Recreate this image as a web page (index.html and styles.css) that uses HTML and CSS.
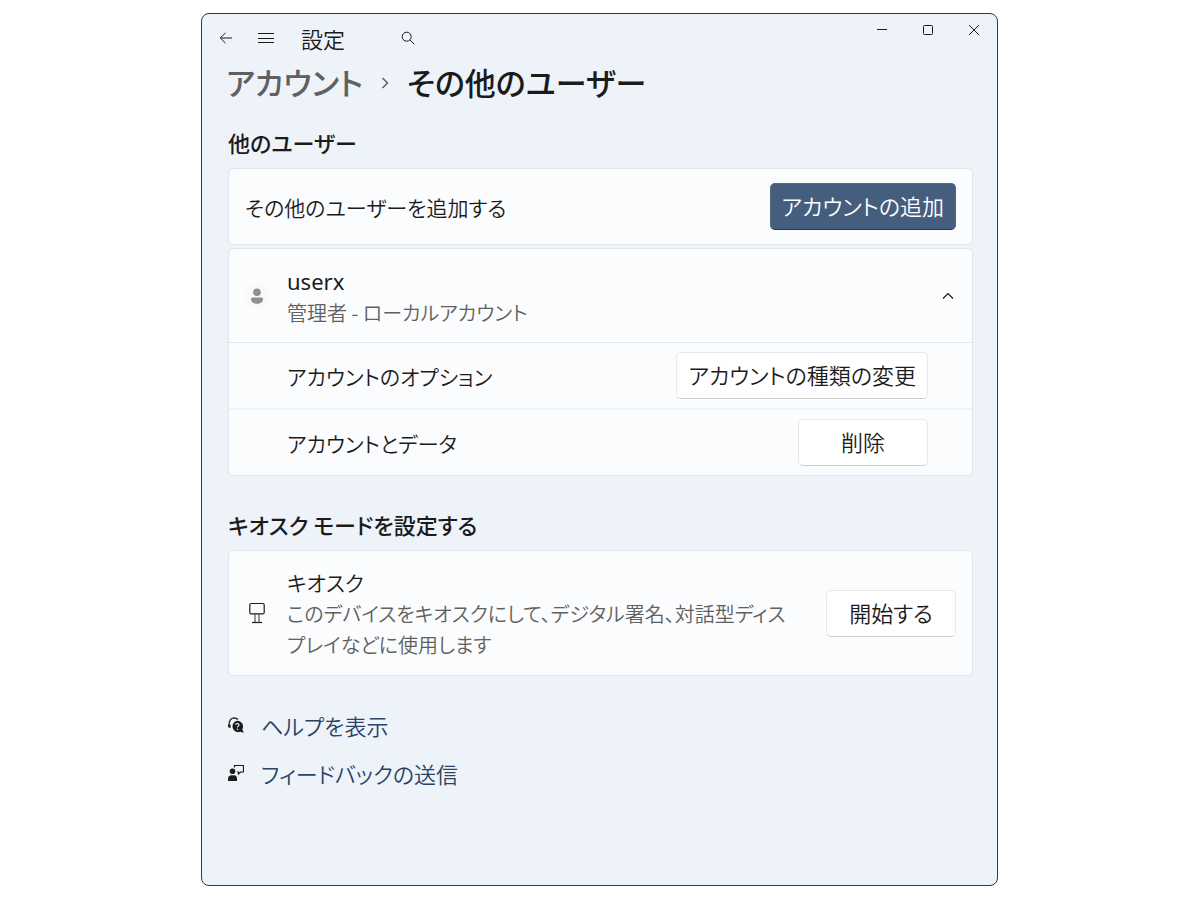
FILE: index.html
```html
<!DOCTYPE html>
<html lang="ja">
<head>
<meta charset="utf-8">
<meta name="viewport" content="width=device-width, initial-scale=1">
<title>設定</title>
<link rel="stylesheet" href="styles.css">
</head>
<body>
<div class="window">
  <header class="titlebar">
    <div class="nav">
      <button class="icon-button" type="button" aria-label="戻る">
        <svg width="14" height="14" viewBox="0 0 14 14" fill="none" stroke="currentColor"><path d="M13 7H1.5M6.5 1.8L1.3 7l5.2 5.2"/></svg>
      </button>
      <button class="icon-button" type="button" aria-label="メニュー">
        <svg width="16" height="12" viewBox="0 0 16 12" fill="none" stroke="currentColor"><path d="M0 1.5h16M0 6.5h16M0 10.5h16"/></svg>
      </button>
      <span class="app-name">設定</span>
      <button class="icon-button" type="button" aria-label="検索">
        <svg width="14" height="14" viewBox="0 0 14 14" fill="none" stroke="currentColor"><circle cx="5.7" cy="5.7" r="4.5"/><path d="M9 9l4.2 4.2"/></svg>
      </button>
    </div>
    <div class="caption">
      <button class="caption-button" type="button" aria-label="最小化">
        <svg width="12" height="12" viewBox="0 0 12 12" fill="none" stroke="currentColor"><path d="M1 5.5h10"/></svg>
      </button>
      <button class="caption-button" type="button" aria-label="最大化">
        <svg width="12" height="12" viewBox="0 0 12 12" fill="none" stroke="currentColor"><rect x="1.5" y="1.5" width="9" height="9" rx="1"/></svg>
      </button>
      <button class="caption-button" type="button" aria-label="閉じる">
        <svg width="12" height="12" viewBox="0 0 12 12" fill="none" stroke="currentColor"><path d="M1 1l10 10M11 1L1 11"/></svg>
      </button>
    </div>
  </header>

  <main class="content">
    <h1 class="breadcrumb">
      <a class="crumb" href="#accounts">アカウント</a>
      <svg class="crumb-arrow" width="8" height="12" viewBox="0 0 8 12" fill="none" stroke="currentColor" stroke-width="1.5"><path d="M1.5 1l5 5-5 5"/></svg>
      <span>その他のユーザー</span>
    </h1>

    <section class="section">
      <h2 class="section-title">他のユーザー</h2>
      <div class="card add-row">
        <span class="label">その他のユーザーを追加する</span>
        <button class="button primary" type="button">アカウントの追加</button>
      </div>
      <div class="card">
        <div class="row user-row">
          <svg class="row-icon" width="24" height="24" viewBox="0 0 24 24"><circle cx="12" cy="12" r="12" fill="#f9f9f9"/><g fill="#8f8f8f"><circle cx="12" cy="8.3" r="3.8"/><path d="M6 15.2c0-1 .7-1.7 1.7-1.7h8.6c1 0 1.7.7 1.7 1.7 0 2.8-2.6 4.5-6 4.5s-6-1.7-6-4.5z"/></g></svg>
          <div class="row-text">
            <div class="label latin">userx</div>
            <div class="description">管理者 - ローカルアカウント</div>
          </div>
          <button class="expander" type="button" aria-label="折りたたむ" aria-expanded="true">
            <svg width="12" height="8" viewBox="0 0 12 8" fill="none" stroke="currentColor" stroke-width="1.2"><path d="M1 6.5l5-5 5 5"/></svg>
          </button>
        </div>
        <div class="row sub-row">
          <span class="label">アカウントのオプション</span>
          <button class="button" type="button">アカウントの種類の変更</button>
        </div>
        <div class="row sub-row last">
          <span class="label">アカウントとデータ</span>
          <button class="button" type="button">削除</button>
        </div>
      </div>
    </section>

    <section class="section">
      <h2 class="section-title">キオスク モードを設定する</h2>
      <div class="card row kiosk-row">
        <svg class="row-icon" width="24" height="24" viewBox="0 0 24 24" fill="none" stroke="#1b1b1b" stroke-width="1.2"><rect x="4.8" y="2.5" width="14.4" height="10.4" rx="1.5"/><path d="M10 13v8M14 13v8" stroke="#555"/><path d="M7 21.5h10"/></svg>
        <div class="row-text">
          <div class="label">キオスク</div>
          <div class="description">このデバイスをキオスクにして、デジタル署名、対話型ディスプレイなどに使用します</div>
        </div>
        <button class="button" type="button">開始する</button>
      </div>
    </section>

    <nav class="links">
      <a class="link" href="#help">
        <svg width="16" height="16" viewBox="0 0 16 16"><path d="M1 8.500C1 3.500 3 1 6 .8c1.700 0 3 .6 4 1.700" fill="none" stroke="#1b1b1b" stroke-width="1.200"/><path d="M0 7.500h2.600v3.300H1.300L0 10z" fill="#1b1b1b"/><path d="M9.300 3.800a5.700 5.700 0 0 1 5 8.500l1.500 3.500-3.700-1a5.700 5.700 0 1 1-2.800-11z" fill="#1b1b1b"/><path d="M7.800 8c0-2 3.200-2 3.200 0 0 1.200-1.600 1.200-1.600 2.600M9.400 11.700v1.200" fill="none" stroke="#fff" stroke-width="1.100"/></svg>
        <span>ヘルプを表示</span>
      </a>
      <a class="link" href="#feedback">
        <svg width="16" height="16" viewBox="0 0 16 16"><g fill="#1b1b1b"><circle cx="4.5" cy="6.3" r="2.8"/><path d="M0 16v-2.600C0 11.500 1.500 10.200 3.300 10.200h2.800c1.800 0 2.900 1.300 2.900 3.200V16z"/></g><path d="M6.500 2.500v-2h9v6.500h-2.700l-2.300 2V7H9" fill="none" stroke="#1b1b1b" stroke-width="1.200"/></svg>
        <span>フィードバックの送信</span>
      </a>
    </nav>
  </main>
</div>
</body>
</html>
```
FILE: styles.css
```css
* {
  box-sizing: border-box;
}

body {
  margin: 0;
  min-height: 100vh;
  display: flex;
  padding: 13px 202px 14px 201px;
  background: #fff;
  color: #1b1b1b;
  font-family: "Noto Sans CJK JP", "Noto Sans", sans-serif;
  font-weight: 350;
  font-feature-settings: "palt";
}

button {
  font: inherit;
  font-feature-settings: inherit;
  color: inherit;
}

svg {
  display: block;
  flex: none;
}

.window {
  flex: 1;
  min-width: 0;
  border: 1px solid #1d3f5c;
  border-radius: 8px;
  background: #eef3fa;
}

.titlebar {
  display: flex;
  justify-content: space-between;
  align-items: flex-start;
}

.nav {
  display: flex;
  align-items: center;
  height: 48px;
  padding-left: 4px;
}

.icon-button,
.caption-button,
.expander {
  display: flex;
  align-items: center;
  justify-content: center;
  padding: 0;
  border: 0;
  background: none;
}

.icon-button {
  width: 40px;
  height: 36px;
}

.app-name {
  padding: 0 43px 0 15px;
  font-size: 22px;
  line-height: 32px;
}

.caption {
  display: flex;
}

.caption-button {
  width: 46px;
  height: 32px;
}

.content {
  padding: 0 24px 24px;
}

.breadcrumb {
  display: flex;
  align-items: center;
  gap: 18px;
  margin: 0;
  padding-bottom: 7px;
  font-size: 31px;
  line-height: 40px;
  font-weight: 500;
}

.breadcrumb > :not(svg) {
  margin-bottom: 2px;
}

.crumb,
.crumb-arrow {
  color: #606060;
}

.crumb {
  text-decoration: none;
}

.section {
  display: grid;
  gap: 3px;
  margin: 0 0 32px 2px;
}

.section-title {
  margin: 15px 0 7px;
  font-size: 22px;
  line-height: 32px;
  font-weight: 500;
}

.section + .section .section-title {
  margin-top: 0;
}

.card {
  border: 1px solid #e0e5ea;
  border-radius: 5px;
  background: #fbfcfe;
}

.label {
  font-size: 21px;
  line-height: 32px;
}

.latin {
  font-family: "Noto Sans", sans-serif;
  font-size: 22px;
  font-weight: 400;
}

.description {
  color: #606060;
  font-size: 20px;
  line-height: 31px;
}

.button {
  flex: none;
  min-width: 130px;
  height: 47px;
  padding: 0 11px 3px;
  border: 1px solid #e8e9eb;
  border-bottom-color: #cbccce;
  border-radius: 5px;
  background: #fff;
  font-size: 22px;
  line-height: 32px;
}

.primary {
  border-color: #506985;
  border-bottom-color: #263c55;
  background: #465e7d;
  color: #fff;
}

.add-row {
  display: flex;
  align-items: center;
  justify-content: space-between;
  min-height: 77px;
  padding: 0 16px;
}

.row {
  display: flex;
  align-items: center;
}

.row-icon {
  margin-right: 18px;
}

.row-text {
  flex: 1;
  min-width: 0;
}

.user-row {
  min-height: 94px;
  padding: 0 16px;
  border-bottom: 1px solid #e0e5ea;
}

.user-row .row-text {
  padding-top: 2px;
}

.expander {
  width: 16px;
  height: 32px;
}

.sub-row {
  justify-content: space-between;
  min-height: 67px;
  padding: 0 44px 0 58px;
  border-bottom: 2px solid #eef3fa;
}

.last {
  min-height: 65px;
  border-bottom: 0;
}

.kiosk-row {
  min-height: 126px;
  padding: 0 16px;
}

.kiosk-row .row-text {
  margin-right: 26px;
}

.links {
  display: grid;
  gap: 16px;
  justify-items: start;
  padding: 1px 0 0 2px;
}

.link {
  display: flex;
  align-items: center;
  gap: 17px;
  color: #2b4365;
  font-size: 22px;
  line-height: 32px;
  text-decoration: none;
}
```
